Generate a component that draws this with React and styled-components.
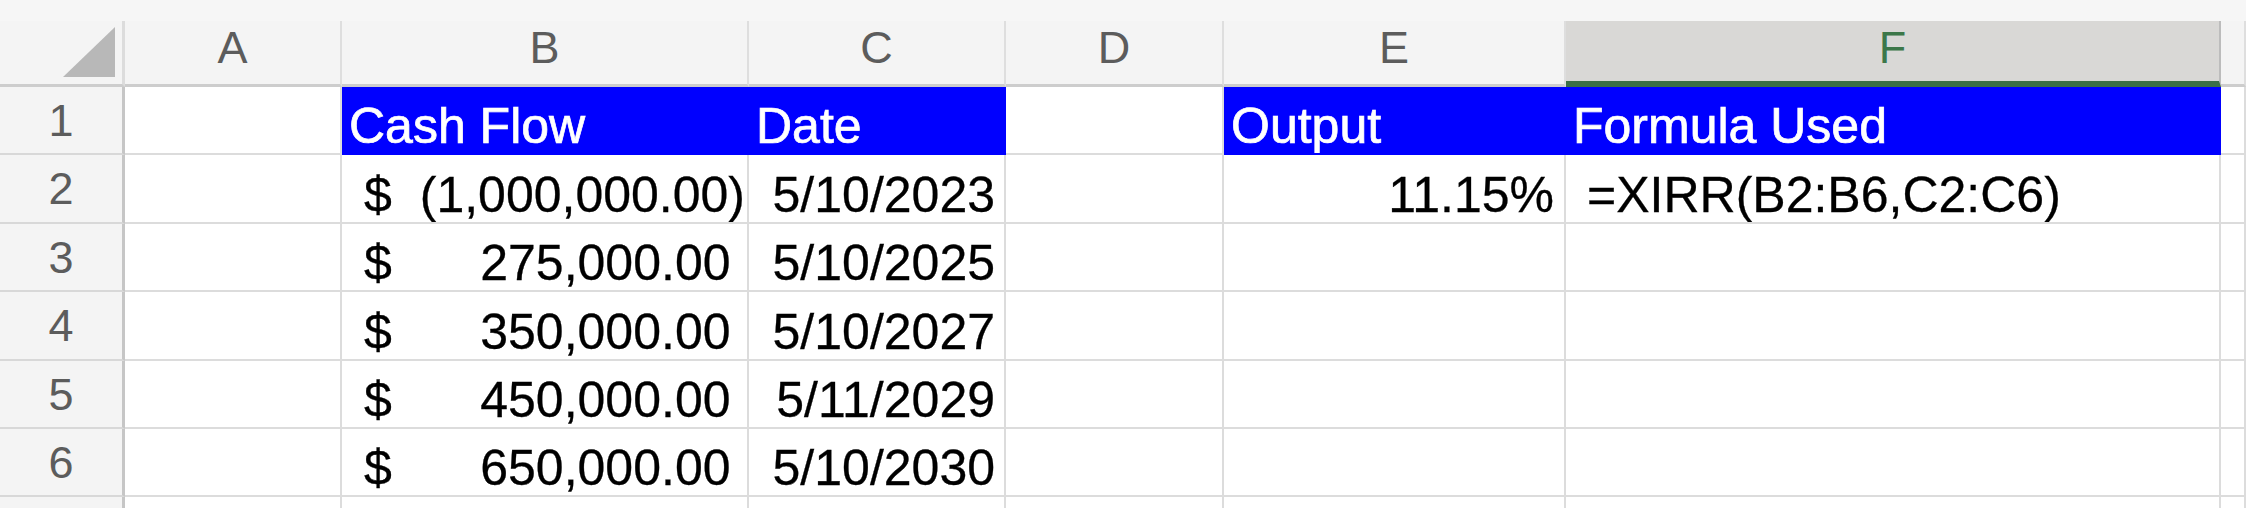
import React from 'react';
import styled, { createGlobalStyle, css } from 'styled-components';

const GlobalStyle = createGlobalStyle`
  html, body {
    margin: 0;
    padding: 0;
    background: #ffffff;
  }
`;

const columns = ['A', 'B', 'C', 'D', 'E', 'F', 'G'];
const activeColumn = 'F';

const flows = [
  { amount: '(1,000,000.00)', negative: true, date: '5/10/2023' },
  { amount: '275,000.00', date: '5/10/2025' },
  { amount: '350,000.00', date: '5/10/2027' },
  { amount: '450,000.00', date: '5/11/2029' },
  { amount: '650,000.00', date: '5/10/2030' },
];

const rowHeights = [68, 69, 68, 69, 68, 68, 68];

const Page = styled.div`
  width: 2246px;
  height: 508px;
  overflow: hidden;
  background: #ffffff;
  font-family: 'Liberation Sans', Arial, sans-serif;
`;

const TopStrip = styled.div`
  height: 21px;
  background: #f6f6f6;
`;

const Grid = styled.div`
  display: grid;
  grid-template-columns: 125px 217px 407px 257px 218px 342px 655px 1fr;
  grid-template-rows: 66px ${rowHeights.map(h => `${h}px`).join(' ')};
`;

const Corner = styled.div`
  display: flex;
  justify-content: flex-end;
  align-items: flex-end;
  padding: 0 7px 7px 0;
  background: #f4f4f4;
  border-right: 3px solid #dcdcdc;
  border-bottom: 3px solid #cdcdcd;
  box-sizing: border-box;
`;

const Triangle = styled.div`
  width: 52px;
  height: 50px;
  background: #b8b8b8;
  clip-path: polygon(100% 0, 100% 100%, 0 100%);
`;

const ColHead = styled.div`
  display: flex;
  justify-content: center;
  align-items: flex-start;
  padding-top: 4px;
  box-sizing: border-box;
  background: #f4f4f4;
  border-right: 2px solid #dedede;
  border-bottom: 3px solid #cdcdcd;
  color: #5c5c5c;
  font-size: 45px;
  line-height: 45px;

  ${({ $active }) =>
    $active &&
    css`
      background: #d9d8d6;
      color: #3c7749;
      border-right-color: #bcbcbc;
      border-bottom: 6px solid #3b6f47;
    `}
`;

const RowHead = styled.div`
  display: flex;
  justify-content: center;
  align-items: center;
  box-sizing: border-box;
  background: #f4f4f4;
  border-right: 3px solid #c6c6c6;
  border-bottom: 2px solid #d8d8d8;
  color: #5c5c5c;
  font-size: 45px;
  line-height: 45px;
`;

const Cell = styled.div`
  display: flex;
  align-items: flex-end;
  justify-content: ${({ $align }) => ($align === 'right' ? 'flex-end' : 'flex-start')};
  box-sizing: border-box;
  padding: 0 ${({ $padRight }) => $padRight ?? 8}px 2px ${({ $padLeft }) => $padLeft ?? 7}px;
  border-right: 2px solid #dcdcdc;
  border-bottom: 2px solid #dcdcdc;
  color: #000000;
  font-size: 50px;
  line-height: 50px;
  white-space: pre;
  overflow: hidden;
  -webkit-text-stroke: 0.3px #000000;

  ${({ $fill }) =>
    $fill &&
    css`
      background: #0000ff;
      color: #ffffff;
      border-color: #0000ff;
      -webkit-text-stroke: 0.7px #ffffff;
    `}
`;

const Money = styled.div`
  flex: 1;
  display: flex;
  justify-content: space-between;
`;

const Figure = styled.span`
  padding-right: ${({ $negative }) => ($negative ? 0 : '0.29em')};
`;

function HeaderRow() {
  return (
    <>
      <Corner>
        <Triangle />
      </Corner>
      {columns.map(c => (
        <ColHead key={c} $active={c === activeColumn}>
          {c === 'G' ? '' : c}
        </ColHead>
      ))}
    </>
  );
}

function TitleRow() {
  return (
    <>
      <RowHead>1</RowHead>
      <Cell />
      <Cell $fill>Cash Flow</Cell>
      <Cell $fill>Date</Cell>
      <Cell />
      <Cell $fill>Output</Cell>
      <Cell $fill>Formula Used</Cell>
      <Cell />
    </>
  );
}

function FlowRow({ index, flow }) {
  const first = index === 0;
  return (
    <>
      <RowHead>{index + 2}</RowHead>
      <Cell />
      <Cell $padLeft={22} $padRight={2}>
        <Money>
          <span>$</span>
          <Figure $negative={flow.negative}>{flow.amount}</Figure>
        </Money>
      </Cell>
      <Cell $align="right" $padRight={9}>
        {flow.date}
      </Cell>
      <Cell />
      <Cell $align="right" $padRight={10}>
        {first ? '11.15%' : ''}
      </Cell>
      <Cell $padLeft={21}>{first ? '=XIRR(B2:B6,C2:C6)' : ''}</Cell>
      <Cell />
    </>
  );
}

// the next row only peeks in at the bottom edge, so its number stays out of view
function EmptyRow() {
  return (
    <>
      <RowHead />
      {columns.map(c => (
        <Cell key={c} />
      ))}
    </>
  );
}

export default function App() {
  return (
    <Page>
      <GlobalStyle />
      <TopStrip />
      <Grid>
        <HeaderRow />
        <TitleRow />
        {flows.map((f, i) => (
          <FlowRow key={f.date} index={i} flow={f} />
        ))}
        <EmptyRow />
      </Grid>
    </Page>
  );
}
